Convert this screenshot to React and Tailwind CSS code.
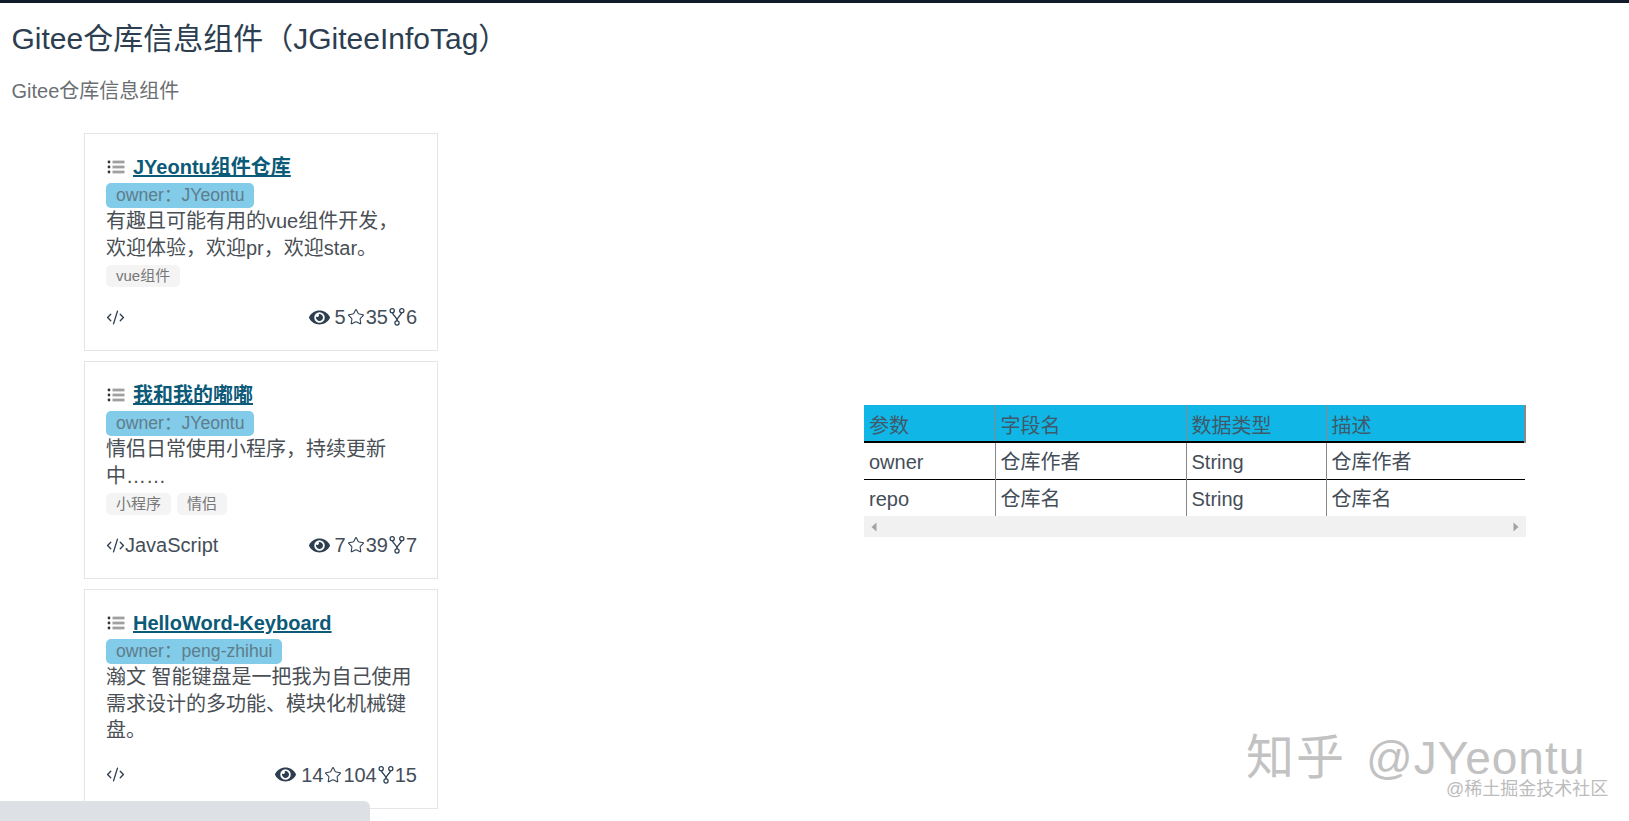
import React from "react";
import { FaEye } from "react-icons/fa";
import { Star, CodeXml } from "lucide-react";

const FONT = "font-['Liberation_Sans','Noto_Sans_CJK_SC',sans-serif]";

const cards = [
  { title: "JYeontu组件仓库", owner: "JYeontu", desc: "有趣且可能有用的vue组件开发，欢迎体验，欢迎pr，欢迎star。", tags: ["vue组件"], lang: "", watch: 5, star: 35, fork: 6 },
  { title: "我和我的嘟嘟", owner: "JYeontu", desc: "情侣日常使用小程序，持续更新中……", tags: ["小程序", "情侣"], lang: "JavaScript", watch: 7, star: 39, fork: 7 },
  { title: "HelloWord-Keyboard", owner: "peng-zhihui", desc: "瀚文 智能键盘是一把我为自己使用需求设计的多功能、模块化机械键盘。", tags: [], lang: "", watch: 14, star: 104, fork: 15 },
];

function ListIcon() {
  return (
    <svg width="18" height="14" viewBox="0 0 18 14" className="mr-[8px] ml-[1px] shrink-0">
      <circle cx="2" cy="2" r="1.4" fill="#333" />
      <circle cx="2" cy="7" r="1.4" fill="#333" />
      <circle cx="2" cy="12" r="1.4" fill="#333" />
      <rect x="5.5" y="0.6" width="12" height="2.8" fill="#a0a0a0" />
      <rect x="5.5" y="5.6" width="12" height="2.8" fill="#a0a0a0" />
      <rect x="5.5" y="10.6" width="12" height="2.8" fill="#a0a0a0" />
    </svg>
  );
}

function ForkIcon() {
  return (
    <svg width="16" height="18" viewBox="0 0 16 18" fill="none" stroke="#2c3e50" strokeWidth="1.25" className="mx-[1px] shrink-0">
      <circle cx="3.2" cy="2.8" r="2.1" />
      <circle cx="12.8" cy="2.8" r="2.1" />
      <circle cx="8" cy="15" r="2.1" />
      <path d="M3.6 4.9C4 8 8 8.5 8 12.9M12.4 4.9C12 8 8 8.5 8 12.9" />
    </svg>
  );
}

function Card({ c }) {
  return (
    <div className="w-[354px] border border-[#e3e5e8] pl-[21px] pr-[20px] pt-[18px] pb-[19px] bg-white">
      <div className="flex items-center h-[30px]">
        <ListIcon />
        <a className="text-[20px] font-bold text-[#0b5a78] underline leading-[30px]">{c.title}</a>
      </div>
      <div className="flex mt-[1px]">
        <span className="h-[25px] leading-[25px] px-[10px] rounded-[5px] bg-[#82cbe9] text-[#5f7d8b] text-[17.6px] whitespace-nowrap">owner：{c.owner}</span>
      </div>
      <p className="text-[20px] leading-[26.5px] text-[#4a4f55] w-[310px]">{c.desc}</p>
      {c.tags.length > 0 ? (
        <div className="flex gap-[6px] mt-1">
          {c.tags.map((t) => (
            <span key={t} className="h-[22px] leading-[22px] px-[10px] rounded-[5px] bg-[#f4f4f5] text-[#777] text-[15px]">{t}</span>
          ))}
        </div>
      ) : (
        <div className="h-px" />
      )}
      <div className="flex items-center justify-between h-[28px] mt-4 text-[20px] text-[#444e58]">
        <div className="flex items-center">
          <CodeXml size={19} strokeWidth={1.7} color="#2c3e50" />
          <span>{c.lang}</span>
        </div>
        <div className="flex items-center">
          <FaEye size={21} color="#2c3e50" className="mr-[5px]" />
          <span>{c.watch}</span>
          <Star size={18} strokeWidth={1.4} color="#2c3e50" className="mx-[1px]" />
          <span>{c.star}</span>
          <ForkIcon />
          <span>{c.fork}</span>
        </div>
      </div>
    </div>
  );
}

function Table() {
  const head = ["参数", "字段名", "数据类型", "描述"];
  const rows = [
    ["owner", "仓库作者", "String", "仓库作者"],
    ["repo", "仓库名", "String", "仓库名"],
  ];
  return (
    <div className="ml-[426px] w-[662px] mt-[1px]">
      <table className="table-fixed border-collapse w-[661px] text-[20px] text-[#444e58]">
        <colgroup>
          <col className="w-[131px]" />
          <col className="w-[191px]" />
          <col className="w-[140px]" />
          <col className="w-[199px]" />
        </colgroup>
        <thead>
          <tr className="h-[37px] bg-[#10b7e6] border-b-2 border-[#000]">
            {head.map((h, i) => (
              <th key={h} className={"font-normal text-left pl-[5px] pt-[5px] text-[#3f5a6b] " + (i < 3 ? "border-r border-[#888]" : "border-r-2 border-[#888]")}>{h}</th>
            ))}
          </tr>
        </thead>
        <tbody>
          {rows.map((r, ri) => (
            <tr key={ri} className={ri === 0 ? "h-[37px] border-b border-[#000]" : "h-[37px]"}>
              {r.map((v, i) => (
                <td key={i} className={"pl-[5px] pt-[2px] " + (i < 3 ? "border-r border-[#888]" : "")}>{v}</td>
              ))}
            </tr>
          ))}
        </tbody>
      </table>
      <div className="flex items-center justify-between h-[21px] bg-[#f1f1f1] px-[7px]">
        <svg width="6" height="10" viewBox="0 0 6 10"><path d="M5.5 0.5V9.5L0.5 5Z" fill="#a3a3a3" /></svg>
        <svg width="6" height="10" viewBox="0 0 6 10"><path d="M0.5 0.5V9.5L5.5 5Z" fill="#a3a3a3" /></svg>
      </div>
    </div>
  );
}

export default function App() {
  return (
    <div className={"relative h-[821px] w-[1629px] overflow-hidden bg-white " + FONT}>
      <div className="h-[3px] bg-[#0f1a2a]" />
      <h1 className="mt-[18px] ml-[11.5px] text-[30px] leading-[36px] font-normal text-[#2c3e50]">Gitee仓库信息组件（JGiteeInfoTag）</h1>
      <p className="mt-[20px] ml-[11.5px] text-[20px] leading-[28px] text-[#6b6f73]">Gitee仓库信息组件</p>
      <div className="flex items-center ml-[84px] mt-[28px]">
        <div className="flex flex-col gap-[10px]">
          {cards.map((c) => (
            <Card key={c.title} c={c} />
          ))}
        </div>
        <Table />
      </div>
      <div className="absolute left-0 bottom-0 w-[370px] h-[20px] bg-[#dde0e4] rounded-tr-md" />
      <div className="absolute left-[1246px] top-[738px] flex items-baseline text-[#c2c2c2] whitespace-nowrap">
        <span className="text-[48px] leading-[40px] tracking-[2px]">知乎</span>
        <span className="ml-[20px] text-[46px] leading-[40px] tracking-[1px]">@JYeontu</span>
      </div>
      <div className="absolute left-[1446px] top-[779px] text-[18px] leading-[20px] text-[#bcbcbc] whitespace-nowrap">@稀土掘金技术社区</div>
    </div>
  );
}
